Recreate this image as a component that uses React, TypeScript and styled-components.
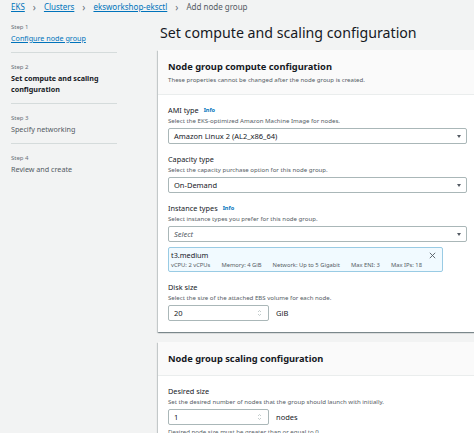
import React from "react";
import styled, { createGlobalStyle } from "styled-components";

const Global = createGlobalStyle`
  html, body { margin: 0; padding: 0; background: #f2f3f3; }
  body { font-family: "Noto Sans", "Open Sans", sans-serif; color: #16191f; overflow: hidden; }
  * { box-sizing: border-box; }
`;

const Page = styled.div`
  width: 474px;
  height: 433px;
  overflow: hidden;
  padding: 0 0 0 11px;
`;

const Crumbs = styled.div`
  display: flex;
  align-items: center;
  gap: 8px;
  height: 13px;
  font-size: 8px;
  color: #545b64;
`;

const CrumbLink = styled.a`
  color: #0073bb;
  text-decoration: underline;
`;

const Sep = styled.span`
  color: #687078;
  font-size: 10px;
  line-height: 10px;
`;

const Body = styled.div`
  display: flex;
`;

const Nav = styled.div`
  width: 147px;
  flex: none;
`;

const NavStep = styled.div<{ $last?: boolean }>`
  width: 106px;
  padding: 9px 0 8px;
  border-bottom: ${(p) => (p.$last ? "none" : "1px solid #d5dbdb")};
`;

const StepNum = styled.div`
  font-size: 6px;
  color: #687078;
  line-height: 10px;
`;

const StepName = styled.div<{ $state: "done" | "current" | "todo" }>`
  font-size: 7.2px;
  line-height: 11px;
  margin-top: 1px;
  color: ${(p) => (p.$state === "done" ? "#0073bb" : p.$state === "current" ? "#16191f" : "#545b64")};
  font-weight: ${(p) => (p.$state === "current" ? 700 : 400)};
  text-decoration: ${(p) => (p.$state === "done" ? "underline" : "none")};
`;

const Main = styled.div`
  flex: 1;
  min-width: 0;
`;

const Title = styled.h1`
  margin: 0;
  height: 37px;
  padding: 8px 0 0 2px;
  font-size: 14.2px;
  font-weight: 400;
  line-height: 24px;
  color: #16191f;
`;

const Panel = styled.div`
  background: #fff;
  width: 330px;
  box-shadow: 0 1px 1px 0 rgba(0, 28, 36, 0.3), 1px 1px 1px 0 rgba(0, 28, 36, 0.15), -1px 1px 1px 0 rgba(0, 28, 36, 0.15);
  margin-bottom: 10px;
`;

const PanelHead = styled.div`
  background: #fafafa;
  border-bottom: 1px solid #eaeded;
  padding: 9px 10px 8px;
`;

const PanelTitle = styled.div`
  font-size: 9.3px;
  font-weight: 700;
  line-height: 16px;
`;

const PanelSub = styled.div`
  font-size: 6.1px;
  color: #545b64;
  line-height: 10px;
  margin-bottom: 1px;
`;

const PanelBody = styled.div`
  padding: 9px 10px 11px;
  display: flex;
  flex-direction: column;
  gap: 9px;
`;

const Field = styled.div`
  display: flex;
  flex-direction: column;
`;

const Label = styled.div`
  font-size: 7.3px;
  height: 12px;
  line-height: 12px;
  color: #16191f;
  display: flex;
  align-items: center;
  gap: 5px;
`;

const Info = styled.span`
  font-size: 5.6px;
  font-weight: 700;
  color: #0073bb;
`;

const Desc = styled.div`
  font-size: 6.1px;
  line-height: 10px;
  color: #545b64;
  margin-bottom: 2px;
`;

const SelectBox = styled.div<{ $placeholder?: boolean }>`
  height: 16px;
  width: 299px;
  border: 1px solid #aab7b8;
  border-radius: 2px;
  display: flex;
  align-items: center;
  justify-content: space-between;
  padding: 0 5px 0 5px;
  font-size: 7.5px;
  color: ${(p) => (p.$placeholder ? "#545b64" : "#16191f")};
  font-style: ${(p) => (p.$placeholder ? "italic" : "normal")};
`;

const Caret = styled.span`
  width: 0;
  height: 0;
  border-left: 2.5px solid transparent;
  border-right: 2.5px solid transparent;
  border-top: 3.5px solid #545b64;
`;

const Token = styled.div`
  margin-top: 5px;
  width: 275px;
  height: 25px;
  border: 1px solid #99cbe4;
  background: #f1faff;
  border-radius: 2px;
  padding: 2px 2px 0 2px;
  position: relative;
`;

const TokenName = styled.div`
  font-size: 7.3px;
  line-height: 11px;
`;

const TokenMeta = styled.div`
  display: flex;
  gap: 11px;
  font-size: 5.8px;
  line-height: 9px;
  color: #545b64;
`;

const Close = styled.svg`
  position: absolute;
  right: 6px;
  top: 4px;
`;

const InputRow = styled.div`
  display: flex;
  align-items: center;
  gap: 7px;
`;

const NumInput = styled.div`
  width: 101px;
  height: 16px;
  border: 1px solid #aab7b8;
  border-radius: 2px;
  display: flex;
  align-items: center;
  justify-content: space-between;
  padding: 0 6px 0 5px;
  font-size: 7.5px;
`;

const Spin = styled.svg``;

const Unit = styled.span`
  font-size: 7.5px;
`;

const Constraint = styled.div`
  font-size: 6.1px;
  color: #545b64;
  line-height: 10px;
  margin-top: 2px;
`;

const Spinner = () => (
  <Spin width="5" height="8" viewBox="0 0 5 8">
    <path d="M1 3L2.5 1.5L4 3M1 5L2.5 6.5L4 5" fill="none" stroke="#aab7b8" strokeWidth="0.7" />
  </Spin>
);

export default function App() {
  return (
    <>
      <Global />
      <Page>
        <Crumbs>
          <CrumbLink>EKS</CrumbLink>
          <Sep>›</Sep>
          <CrumbLink>Clusters</CrumbLink>
          <Sep>›</Sep>
          <CrumbLink>eksworkshop-eksctl</CrumbLink>
          <Sep>›</Sep>
          <span>Add node group</span>
        </Crumbs>
        <Body>
          <Nav>
            <NavStep>
              <StepNum>Step 1</StepNum>
              <StepName $state="done">Configure node group</StepName>
            </NavStep>
            <NavStep>
              <StepNum>Step 2</StepNum>
              <StepName $state="current">Set compute and scaling configuration</StepName>
            </NavStep>
            <NavStep>
              <StepNum>Step 3</StepNum>
              <StepName $state="todo">Specify networking</StepName>
            </NavStep>
            <NavStep $last>
              <StepNum>Step 4</StepNum>
              <StepName $state="todo">Review and create</StepName>
            </NavStep>
          </Nav>
          <Main>
            <Title>Set compute and scaling configuration</Title>
            <Panel>
              <PanelHead>
                <PanelTitle>Node group compute configuration</PanelTitle>
                <PanelSub>These properties cannot be changed after the node group is created.</PanelSub>
              </PanelHead>
              <PanelBody>
                <Field>
                  <Label>AMI type <Info>Info</Info></Label>
                  <Desc>Select the EKS-optimized Amazon Machine Image for nodes.</Desc>
                  <SelectBox>Amazon Linux 2 (AL2_x86_64)<Caret /></SelectBox>
                </Field>
                <Field>
                  <Label>Capacity type</Label>
                  <Desc>Select the capacity purchase option for this node group.</Desc>
                  <SelectBox>On-Demand<Caret /></SelectBox>
                </Field>
                <Field>
                  <Label>Instance types <Info>Info</Info></Label>
                  <Desc>Select instance types you prefer for this node group.</Desc>
                  <SelectBox $placeholder>Select<Caret /></SelectBox>
                  <Token>
                    <TokenName>t3.medium</TokenName>
                    <TokenMeta>
                      <span>vCPU: 2 vCPUs</span>
                      <span>Memory: 4 GiB</span>
                      <span>Network: Up to 5 Gigabit</span>
                      <span>Max ENI: 3</span>
                      <span>Max IPs: 18</span>
                    </TokenMeta>
                    <Close width="7" height="7" viewBox="0 0 7 7">
                      <path d="M0.8 0.8L6.2 6.2M6.2 0.8L0.8 6.2" stroke="#545b64" strokeWidth="0.9" />
                    </Close>
                  </Token>
                </Field>
                <Field>
                  <Label>Disk size</Label>
                  <Desc>Select the size of the attached EBS volume for each node.</Desc>
                  <InputRow>
                    <NumInput>20<Spinner /></NumInput>
                    <Unit>GiB</Unit>
                  </InputRow>
                </Field>
              </PanelBody>
            </Panel>
            <Panel>
              <PanelHead>
                <PanelTitle>Node group scaling configuration</PanelTitle>
              </PanelHead>
              <PanelBody>
                <Field>
                  <Label>Desired size</Label>
                  <Desc>Set the desired number of nodes that the group should launch with initially.</Desc>
                  <InputRow>
                    <NumInput>1<Spinner /></NumInput>
                    <Unit>nodes</Unit>
                  </InputRow>
                  <Constraint>Desired node size must be greater than or equal to 0</Constraint>
                </Field>
              </PanelBody>
            </Panel>
          </Main>
        </Body>
      </Page>
    </>
  );
}
